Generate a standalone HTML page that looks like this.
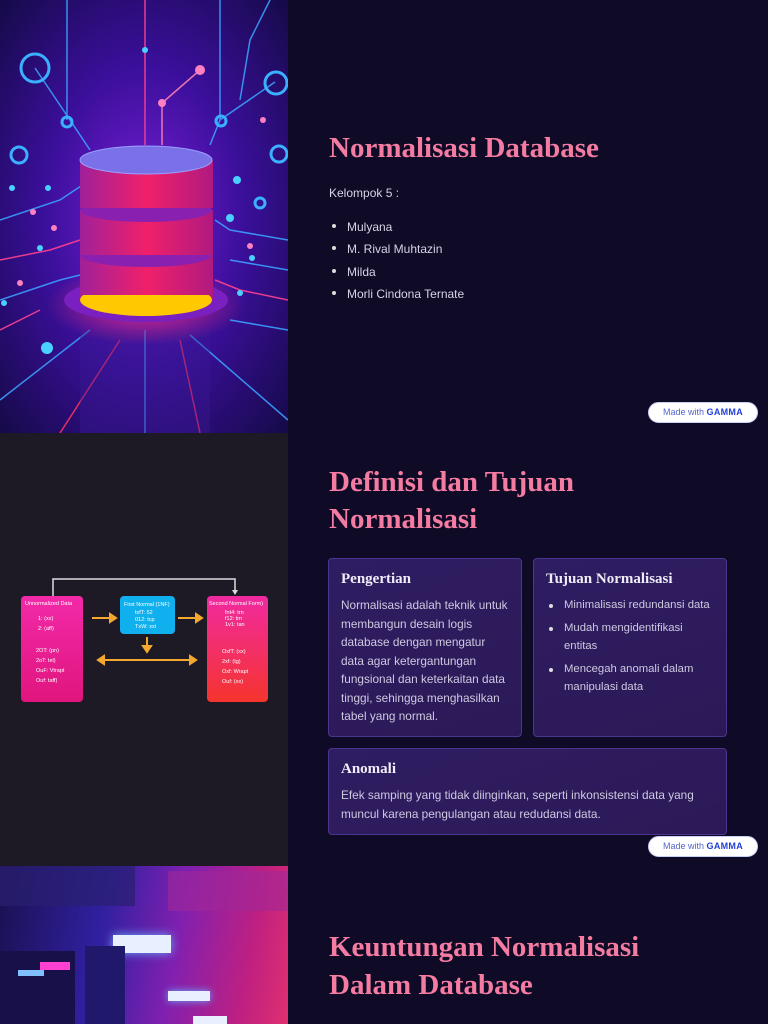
<!DOCTYPE html>
<html><head><meta charset="utf-8"><style>
*{margin:0;padding:0;box-sizing:border-box}
body{width:768px;height:1024px;overflow:hidden;background:#0f0a24;font-family:"Liberation Sans",sans-serif}
.sec{position:absolute;left:0;width:768px}
.right{position:absolute;left:288px;right:0;top:0;bottom:0;background:#0f0a26}
h1{font-family:"Liberation Serif",serif;color:#f47ba1;font-weight:bold;font-size:29px;line-height:38px}
.txt{color:#d8d3e6;font-size:12px}
ul{list-style:none}
li{position:relative;padding-left:18px}
li:before{content:"";position:absolute;left:3px;top:8px;width:4px;height:4px;border-radius:50%;background:#ddd}
.badge{position:absolute;width:110px;height:21px;background:#fff;border-radius:11px;border:1px solid #c9cff5;font-size:9px;color:#5566cc;text-align:center;line-height:19px}
.badge b{color:#2340d8;font-weight:900;letter-spacing:.3px}
.card{position:absolute;background:linear-gradient(160deg,#2f1d62,#2b1957);border:1px solid #4a3590;border-radius:4px;padding:12px}
.card h3{font-family:"Liberation Serif",serif;color:#f0ecf8;font-size:15px;font-weight:bold;margin-bottom:8px}
.card .txt{line-height:18.5px;font-size:11.8px;color:#cfc9e0}
.card li:before{top:8px}
</style></head><body>

<div class="sec" style="top:0;height:433px">
<svg width="288" height="433" style="position:absolute;left:0;top:0">
<defs>
<radialGradient id="bg1" cx="50%" cy="50%" r="70%"><stop offset="0" stop-color="#7a1ed8"/><stop offset=".5" stop-color="#3a0f9a"/><stop offset="1" stop-color="#160a4a"/></radialGradient>
<linearGradient id="cyl" x1="0" x2="1"><stop offset="0" stop-color="#a0209a"/><stop offset=".5" stop-color="#f0206a"/><stop offset="1" stop-color="#b01a80"/></linearGradient>
<radialGradient id="glow" cx="50%" cy="50%" r="50%"><stop offset="0" stop-color="#ff3070" stop-opacity=".8"/><stop offset="1" stop-color="#ff3070" stop-opacity="0"/></radialGradient>
</defs>
<rect width="288" height="433" fill="url(#bg1)"/>
<g fill="none" stroke-width="1.5" opacity=".9">
<path d="M0 220 L60 200 L90 180" stroke="#3aa0ff"/>
<path d="M0 260 L50 250 L80 240" stroke="#ff4090"/>
<path d="M0 300 L60 280 L80 275" stroke="#3aa0ff"/>
<path d="M0 330 L40 310" stroke="#ff4090"/>
<path d="M288 240 L230 230 L215 220" stroke="#3aa0ff"/>
<path d="M288 270 L230 260" stroke="#3aa0ff"/>
<path d="M288 300 L240 290 L215 280" stroke="#ff4090"/>
<path d="M288 330 L230 320" stroke="#3aa0ff"/>
<path d="M0 400 L90 330" stroke="#3aa0ff"/>
<path d="M60 433 L120 340" stroke="#ff3060"/>
<path d="M145 433 L145 330" stroke="#3aa0ff"/>
<path d="M200 433 L180 340" stroke="#ff3060"/>
<path d="M288 420 L190 335" stroke="#3aa0ff"/>
<path d="M35 68 L70 120 L90 150" stroke="#3aa0ff"/>
<path d="M67 0 L67 120" stroke="#3aa0ff"/>
<path d="M145 0 L145 145" stroke="#ff4090"/>
<path d="M200 70 L162 103 L162 145" stroke="#ff80b0"/>
<path d="M220 0 L220 120 L210 145" stroke="#3aa0ff"/>
<path d="M275 82 L220 120" stroke="#3aa0ff"/>
<path d="M270 0 L250 40 L240 100" stroke="#3aa0ff"/>
</g>
<rect x="80" y="330" width="130" height="103" fill="#3a1890" opacity=".4"/>
<ellipse cx="146" cy="305" rx="100" ry="40" fill="url(#glow)"/>
<ellipse cx="146" cy="300" rx="82" ry="22" fill="#7a20c0"/>
<rect x="80" y="260" width="133" height="40" fill="url(#cyl)"/>
<ellipse cx="146" cy="300" rx="66" ry="16" fill="#ffc800"/>
<rect x="80" y="255" width="133" height="40" fill="url(#cyl)"/>
<ellipse cx="146" cy="255" rx="66" ry="12" fill="#8a20b0"/>
<rect x="80" y="210" width="133" height="45" fill="url(#cyl)"/>
<ellipse cx="146" cy="210" rx="66" ry="12" fill="#8a20b0"/>
<rect x="80" y="160" width="133" height="48" fill="url(#cyl)"/>
<ellipse cx="146" cy="160" rx="66" ry="14" fill="#7a70e8" stroke="#9aa0ff"/>
<g fill="none" stroke="#3ab0ff" stroke-width="3">
<circle cx="35" cy="68" r="14"/><circle cx="276" cy="83" r="11"/><circle cx="19" cy="155" r="8"/><circle cx="67" cy="122" r="5"/><circle cx="221" cy="121" r="5"/><circle cx="279" cy="154" r="8"/><circle cx="260" cy="203" r="5"/>
</g>
<g fill="#4ad0ff"><circle cx="145" cy="50" r="3"/><circle cx="47" cy="348" r="6"/><circle cx="12" cy="188" r="3"/><circle cx="48" cy="188" r="3"/><circle cx="237" cy="180" r="4"/><circle cx="230" cy="218" r="4"/><circle cx="40" cy="248" r="3"/><circle cx="252" cy="258" r="3"/><circle cx="4" cy="303" r="3"/><circle cx="240" cy="293" r="3"/></g>
<g fill="#ff80c0"><circle cx="200" cy="70" r="5"/><circle cx="162" cy="103" r="4"/><circle cx="33" cy="212" r="3"/><circle cx="54" cy="228" r="3"/><circle cx="250" cy="246" r="3"/><circle cx="263" cy="120" r="3"/><circle cx="20" cy="283" r="3"/></g>
</svg>
<div class="right">
<h1 style="position:absolute;left:41px;top:129px">Normalisasi Database</h1>
<div class="txt" style="position:absolute;left:41px;top:186px">Kelompok 5 :</div>
<ul class="txt" style="position:absolute;left:41px;top:216px;line-height:22.3px">
<li>Mulyana</li><li>M. Rival Muhtazin</li><li>Milda</li><li>Morli Cindona Ternate</li></ul>
<div class="badge" style="left:360px;top:402px">Made with <b>GAMMA</b></div>
</div>
</div>

<div class="sec" style="top:433px;height:433px;background:#1e1a25">
<svg width="288" height="433" style="position:absolute;left:0;top:0;font-family:'Liberation Sans',sans-serif">
<defs>
<linearGradient id="pk" x1="0" y1="0" x2="0" y2="1"><stop offset="0" stop-color="#f22aa8"/><stop offset="1" stop-color="#e0157e"/></linearGradient>
<linearGradient id="rd" x1="0" y1="0" x2="0" y2="1"><stop offset="0" stop-color="#f02aa0"/><stop offset="1" stop-color="#f5342e"/></linearGradient>
</defs>
<path d="M53 163 V146 H235 V160" fill="none" stroke="#ddd" stroke-width="1.5"/>
<path d="M232 157 L235 162 L238 157Z" fill="#ddd"/>
<rect x="21" y="163" width="62" height="106" rx="4" fill="url(#pk)"/>
<rect x="120" y="163" width="55" height="38" rx="4" fill="#10b0ee"/>
<rect x="207" y="163" width="61" height="106" rx="4" fill="url(#rd)"/>
<g fill="#fff" font-size="5.5">
<text x="25" y="172">Unnormalized Data</text>
<text x="124" y="173">First Normal (1NF)</text>
<text x="209" y="172">Second Normal Form)</text>
<text x="38" y="187">1: (xx)</text><text x="38" y="197">2: (aff)</text>
<text x="36" y="219">2OT: (pn)</text><text x="36" y="229">2oT: tel)</text><text x="36" y="239">OuF: Vtrapt</text><text x="36" y="249">Ouf: taff)</text>
<text x="135" y="181">txfT: 52</text><text x="135" y="188">012: tcp</text><text x="135" y="195">TxW: xxi</text>
<text x="225" y="181">fnt4: trn</text><text x="225" y="187">f12: trn</text><text x="225" y="193">1v1: tan</text>
<text x="222" y="220">OxfT: (xx)</text><text x="222" y="230">2xf: (tg)</text><text x="222" y="240">Oxf: Wrapt</text><text x="222" y="250">Ouf: (xx)</text>
</g>
<g stroke="#f5a830" stroke-width="2" fill="#f5a830">
<path d="M92 185 H112" /><path d="M110 181 L116 185 L110 189Z"/>
<path d="M178 185 H198"/><path d="M196 181 L202 185 L196 189Z"/>
<path d="M147 204 V214"/><path d="M143 213 L147 219 L151 213Z"/>
<path d="M102 227 H192"/><path d="M104 223 L98 227 L104 231Z"/><path d="M190 223 L196 227 L190 231Z"/>
</g>
</svg>
<div class="right">
<h1 style="position:absolute;left:41px;top:31px;line-height:37px">Definisi dan Tujuan<br>Normalisasi</h1>
<div class="card" style="left:40px;top:125px;width:194px;height:179px">
<h3>Pengertian</h3>
<div class="txt">Normalisasi adalah teknik untuk membangun desain logis database dengan mengatur data agar ketergantungan fungsional dan keterkaitan data tinggi, sehingga menghasilkan tabel yang normal.</div></div>
<div class="card" style="left:245px;top:125px;width:194px;height:179px">
<h3>Tujuan Normalisasi</h3>
<ul class="txt" style="line-height:18.5px;font-size:11.3px"><li style="margin-bottom:4px">Minimalisasi redundansi data</li><li style="margin-bottom:4px">Mudah mengidentifikasi entitas</li><li>Mencegah anomali dalam manipulasi data</li></ul></div>
<div class="card" style="left:40px;top:315px;width:399px;height:87px">
<h3>Anomali</h3>
<div class="txt">Efek samping yang tidak diinginkan, seperti inkonsistensi data yang muncul karena pengulangan atau redudansi data.</div></div>
<div class="badge" style="left:360px;top:403px">Made with <b>GAMMA</b></div>
</div>
</div>

<div class="sec" style="top:866px;height:158px">
<div style="position:absolute;left:0;top:0;width:288px;height:158px;background:linear-gradient(100deg,#1a1050 0%,#3020a0 35%,#8020b0 60%,#c02080 85%,#e03070 100%);overflow:hidden">
<div style="position:absolute;left:0;top:0;width:135px;height:40px;background:#2a2070;opacity:.7"></div>
<div style="position:absolute;left:168px;top:5px;width:120px;height:40px;background:#a02898;opacity:.6"></div>
<div style="position:absolute;left:113px;top:69px;width:58px;height:18px;background:#e8f0ff;box-shadow:0 0 10px #6af"></div>
<div style="position:absolute;left:168px;top:125px;width:42px;height:10px;background:#e8f0ff;box-shadow:0 0 8px #6af"></div>
<div style="position:absolute;left:193px;top:150px;width:34px;height:8px;background:#e8f0ff"></div>
<div style="position:absolute;left:0;top:85px;width:75px;height:73px;background:#181048"></div>
<div style="position:absolute;left:85px;top:80px;width:40px;height:78px;background:#20186a"></div>
<div style="position:absolute;left:40px;top:96px;width:30px;height:8px;background:#ff40d0"></div>
<div style="position:absolute;left:18px;top:104px;width:26px;height:6px;background:#80c0ff"></div>
</div>
<div class="right">
<h1 style="position:absolute;left:41px;top:62px;line-height:38px">Keuntungan Normalisasi<br>Dalam Database</h1>
</div>
</div>
</body></html>
